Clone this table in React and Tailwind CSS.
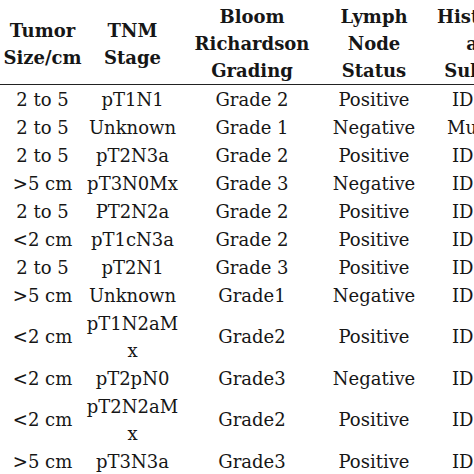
const rows = [
  ['2 to 5', ['pT1N1'], 'Grade 2', 'Positive', 'IDC'],
  ['2 to 5', ['Unknown'], 'Grade 1', 'Negative', 'Mucinous'],
  ['2 to 5', ['pT2N3a'], 'Grade 2', 'Positive', 'IDC'],
  ['>5 cm', ['pT3N0Mx'], 'Grade 3', 'Negative', 'IDC'],
  ['2 to 5', ['PT2N2a'], 'Grade 2', 'Positive', 'IDC'],
  ['<2 cm', ['pT1cN3a'], 'Grade 2', 'Positive', 'IDC'],
  ['2 to 5', ['pT2N1'], 'Grade 3', 'Positive', 'IDC'],
  ['>5 cm', ['Unknown'], 'Grade1', 'Negative', 'IDC'],
  ['<2 cm', ['pT1N2aM', 'x'], 'Grade2', 'Positive', 'IDC'],
  ['<2 cm', ['pT2pN0'], 'Grade3', 'Negative', 'IDC'],
  ['<2 cm', ['pT2N2aM', 'x'], 'Grade2', 'Positive', 'IDC'],
  ['>5 cm', ['pT3N3a'], 'Grade3', 'Positive', 'IDC'],
]

const cols = 'grid grid-cols-[85px_95px_144px_100px_122px]'

function App() {
  return (
    <div className="w-[474px] h-[474px] overflow-hidden bg-white text-[#161616] font-['DejaVu_Serif',serif] text-[18px] leading-[27px]">
      <div className="w-[546px] pt-[3px]">
        <div className={`${cols} items-center border-b border-[#222] font-bold text-center`}>
          <div>Tumor<br />Size/cm</div>
          <div>TNM<br />Stage</div>
          <div>Bloom<br />Richardson<br />Grading</div>
          <div>Lymph<br />Node<br />Status</div>
          <div>Histology<br />and<br />Subtype</div>
        </div>

        {rows.map((r, i) => (
          <div key={i} className={`${cols} items-center py-[0.5px]`}>
            <div className="text-center">{r[0]}</div>
            <div className="text-center">
              {r[1].map((t, j) => <div key={j}>{t}</div>)}
            </div>
            <div className="text-center">{r[2]}</div>
            <div className="text-center">{r[3]}</div>
            <div className={r[4] === 'IDC' ? 'pl-[28px]' : 'pl-[23px]'}>{r[4]}</div>
          </div>
        ))}
      </div>
    </div>
  )
}

export default App
